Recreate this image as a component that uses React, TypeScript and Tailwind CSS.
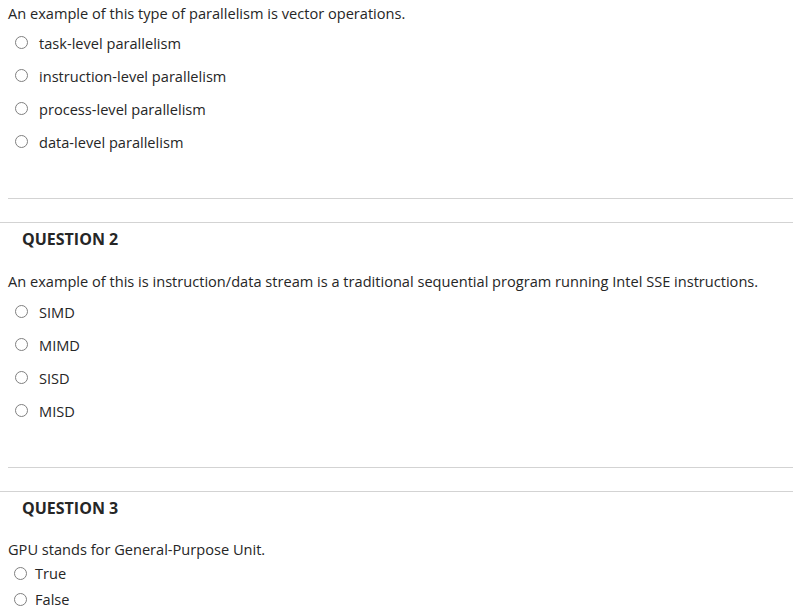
import React from "react";

function Radio({ label, tight }: { label: string; tight?: boolean }) {
  return (
    <div className={tight ? "flex h-[26px] items-center pl-[14px]" : "flex h-[33px] items-center pl-[15px]"}>
      <span className="inline-block h-[13px] w-[13px] shrink-0 rounded-full border border-[#808080] bg-white" />
      <span className={tight ? "ml-[8px] leading-[20px]" : "ml-[11px] leading-[20px]"}>{label}</span>
    </div>
  );
}

function Divider() {
  return (
    <>
      <div className="ml-2 border-t border-[#d3d3d3]" />
      <div className="mt-[23px] border-t border-[#d3d3d3]" />
    </>
  );
}

export default function App() {
  return (
    <div className="w-[793px] h-[616px] overflow-hidden bg-white font-['Open_Sans',sans-serif] text-[14.6px] text-[#262626]">
      <p className="pl-2 pt-[3px] leading-[20px]">An example of this type of parallelism is vector operations.</p>
      <div className="mt-[3px]">
        <Radio label="task-level parallelism" />
        <Radio label="instruction-level parallelism" />
        <Radio label="process-level parallelism" />
        <Radio label="data-level parallelism" />
      </div>
      <div className="mt-[40px]">
        <Divider />
      </div>
      <h3 className="pl-[22px] pt-[4px] text-[16px] font-bold leading-[24px] text-[#262626]">QUESTION 2</h3>
      <p className="mt-[20px] pl-2 leading-[20px]">
        An example of this is instruction/data stream is a traditional sequential program running Intel SSE instructions.
      </p>
      <div className="mt-[4px]">
        <Radio label="SIMD" />
        <Radio label="MIMD" />
        <Radio label="SISD" />
        <Radio label="MISD" />
      </div>
      <div className="mt-[40px]">
        <Divider />
      </div>
      <h3 className="pl-[22px] pt-[4px] text-[16px] font-bold leading-[24px] text-[#262626]">QUESTION 3</h3>
      <p className="mt-[19px] pl-2 leading-[20px]">GPU stands for General-Purpose Unit.</p>
      <div className="mt-[1px]">
        <Radio label="True" tight />
        <Radio label="False" tight />
      </div>
    </div>
  );
}
